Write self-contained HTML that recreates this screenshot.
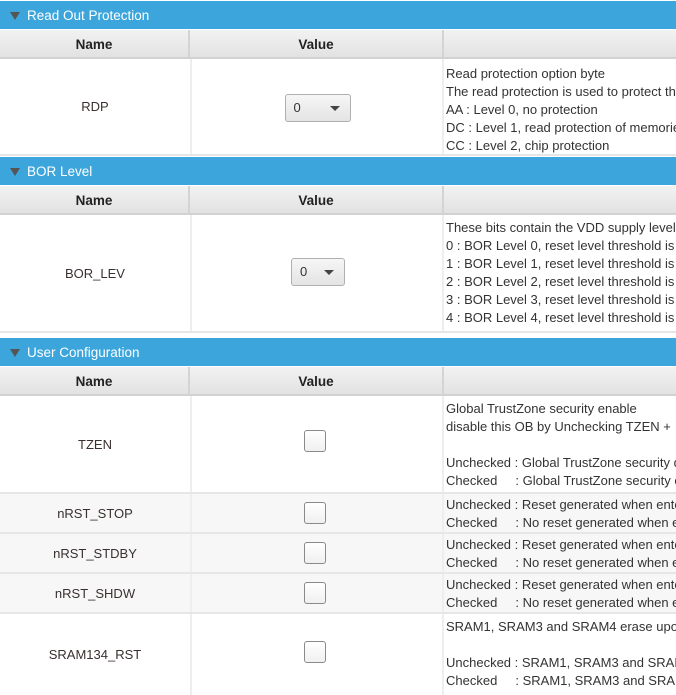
<!DOCTYPE html><html><head><style>
body{margin:0;width:676px;height:695px;overflow:hidden;background:#fff;font-family:"Liberation Sans",sans-serif;font-size:13px;color:#333;position:relative}
.bar{position:absolute;left:0;width:676px;background:#3ca6dc;color:#fff;font-size:13.5px}
.bar span{position:absolute;left:27px;top:7px}
.bar i{position:absolute;left:10px;top:11px;width:0;height:0;border-left:5px solid transparent;border-right:5px solid transparent;border-top:8px solid #555}
.hd{position:absolute;left:0;width:676px;height:27px;background:linear-gradient(#f2f2f2,#e2e2e2);border-bottom:2px solid #d2d2d2;font-weight:bold;font-size:13.5px;color:#222}
.hd div{position:absolute;top:0;height:27px;line-height:29px;text-align:center;border-right:2px solid #d4d4d4}
.row{position:absolute;left:0;width:676px;border-bottom:2px solid #e6e6e6}
.row .n{position:absolute;left:0;width:190px;top:0;bottom:0;display:flex;align-items:center;justify-content:center;border-right:2px solid #eee;color:#3a3030}
.row .v{position:absolute;left:192px;width:250px;top:0;bottom:0;display:flex;align-items:center;justify-content:center;border-right:2px solid #eee}
.row .d{position:absolute;left:446px;top:6px;line-height:18px;white-space:pre;color:#333}
.g{background:#f7f7f7}
.cb{width:20px;height:20px;border:1px solid #8a8a8a;border-radius:3px;background:linear-gradient(#fff,#f0f0f0)}
.sel{height:26px;border:1px solid #b0b0b0;border-radius:3px;background:linear-gradient(#f6f6f6,#e4e4e4);position:relative}
.sel span{position:absolute;left:8px;top:5px}
.sel i{position:absolute;right:10px;top:11px;border-left:5px solid transparent;border-right:5px solid transparent;border-top:5px solid #444}
</style></head><body>
<div class="bar" style="top:1px;height:28px"><i></i><span>Read Out Protection</span></div>
<div class="hd" style="top:30px"><div style="left:0;width:188px">Name</div><div style="left:190px;width:252px">Value</div></div>
<div class="row" style="top:59px;height:95px"><div class="n">RDP</div><div class="v"><div class="sel" style="width:64px;margin-left:1px;margin-top:2px"><span>0</span><i></i></div></div><div class="d">Read protection option byte
The read protection is used to protect the
AA : Level 0, no protection
DC : Level 1, read protection of memories
CC : Level 2, chip protection</div></div>
<div class="bar" style="top:157px;height:28px"><i></i><span>BOR Level</span></div>
<div class="hd" style="top:186px"><div style="left:0;width:188px">Name</div><div style="left:190px;width:252px">Value</div></div>
<div class="row" style="top:215px;height:116px"><div class="n">BOR_LEV</div><div class="v"><div class="sel" style="width:52px;margin-left:2px;margin-top:-2px"><span>0</span><i></i></div></div><div class="d" style="top:4px">These bits contain the VDD supply level
0 : BOR Level 0, reset level threshold is a
1 : BOR Level 1, reset level threshold is a
2 : BOR Level 2, reset level threshold is a
3 : BOR Level 3, reset level threshold is a
4 : BOR Level 4, reset level threshold is a</div></div>
<div class="bar" style="top:338px;height:28px"><i></i><span>User Configuration</span></div>
<div class="hd" style="top:367px"><div style="left:0;width:188px">Name</div><div style="left:190px;width:252px">Value</div></div>
<div class="row" style="top:396px;height:96px"><div class="n">TZEN</div><div class="v"><div class="cb" style="margin-left:-4px;margin-top:-6px"></div></div><div class="d" style="top:4px">Global TrustZone security enable
disable this OB by Unchecking TZEN +

Unchecked : Global TrustZone security d
Checked     : Global TrustZone security e</div></div>
<div class="row g" style="top:494px;height:38px"><div class="n">nRST_STOP</div><div class="v"><div class="cb" style="margin-left:-4px"></div></div><div class="d" style="top:2px">Unchecked : Reset generated when ente
Checked     : No reset generated when e</div></div>
<div class="row g" style="top:534px;height:38px"><div class="n">nRST_STDBY</div><div class="v"><div class="cb" style="margin-left:-4px"></div></div><div class="d" style="top:2px">Unchecked : Reset generated when ente
Checked     : No reset generated when e</div></div>
<div class="row g" style="top:574px;height:38px"><div class="n">nRST_SHDW</div><div class="v"><div class="cb" style="margin-left:-4px"></div></div><div class="d" style="top:2px">Unchecked : Reset generated when ente
Checked     : No reset generated when e</div></div>
<div class="row" style="top:614px;height:81px;border-bottom:none"><div class="n">SRAM134_RST</div><div class="v"><div class="cb" style="margin-left:-4px;margin-top:-6px"></div></div><div class="d" style="top:4px">SRAM1, SRAM3 and SRAM4 erase upon

Unchecked : SRAM1, SRAM3 and SRAM
Checked     : SRAM1, SRAM3 and SRAM</div></div>
</body></html>
